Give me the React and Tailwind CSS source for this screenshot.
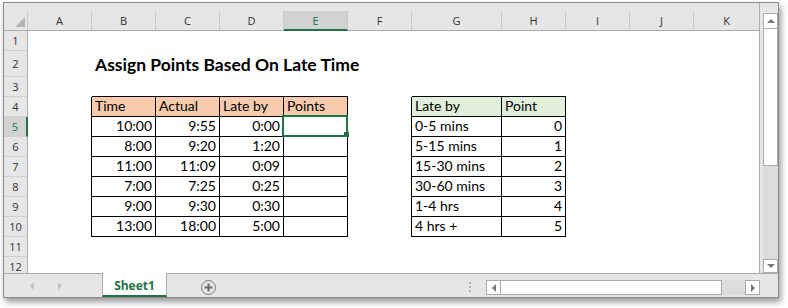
import React from "react";

// sheet columns, widths include the right gridline
const COLS = [
  { id: "A", w: "w-[64px]" },
  { id: "B", w: "w-[64px]" },
  { id: "C", w: "w-[64px]" },
  { id: "D", w: "w-[64px]" },
  { id: "E", w: "w-[64px]" },
  { id: "F", w: "w-[64px]" },
  { id: "G", w: "w-[90px]" },
  { id: "H", w: "w-[64px]" },
  { id: "I", w: "w-[64px]" },
  { id: "J", w: "w-[64px]" },
  { id: "K", w: "w-[65px]" },
];

const TIMES = [
  ["10:00", "9:55", "0:00"],
  ["8:00", "9:20", "1:20"],
  ["11:00", "11:09", "0:09"],
  ["7:00", "7:25", "0:25"],
  ["9:00", "9:30", "0:30"],
  ["13:00", "18:00", "5:00"],
];

const POINTS = [
  ["0-5 mins", "0"],
  ["5-15 mins", "1"],
  ["15-30 mins", "2"],
  ["30-60 mins", "3"],
  ["1-4 hrs", "4"],
  ["4 hrs +", "5"],
];

const ROW_H = {
  1: "h-[20px]",
  2: "h-[26px]",
};

const inTable = (col, row) =>
  row >= 4 && row <= 10 && ("BCDE".includes(col) || "GH".includes(col));

function cellContent(col, row) {
  if (row === 2 && col === "B")
    return { text: "Assign Points Based On Late Time", title: true };
  if (row === 4) {
    const head = { B: "Time", C: "Actual", D: "Late by", E: "Points", G: "Late by", H: "Point" };
    if (head[col]) {
      return { text: head[col], bg: "BCDE".includes(col) ? "bg-[#f8cbad]" : "bg-[#e2efda]" };
    }
  }
  if (row >= 5 && row <= 10) {
    const i = row - 5;
    if (col === "B") return { text: TIMES[i][0], right: true };
    if (col === "C") return { text: TIMES[i][1], right: true };
    if (col === "D") return { text: TIMES[i][2], right: true };
    if (col === "G") return { text: POINTS[i][0] };
    if (col === "H") return { text: POINTS[i][1], right: true };
  }
  return null;
}

function Cell({ col, row }) {
  const c = cellContent(col.id, row);
  const rightLine = inTable(col.id, row) || (row >= 4 && row <= 10 && (col.id === "A" || col.id === "F"));
  const bottomLine = inTable(col.id, row) || (row === 3 && ("BCDE".includes(col.id) || "GH".includes(col.id)));
  const selected = col.id === "E" && row === 5;

  return (
    <div
      className={[
        col.w,
        "shrink-0 h-full flex items-end pb-[2px] px-[3px] whitespace-nowrap",
        rightLine ? "border-r border-r-black" : "",
        bottomLine ? "border-b border-b-black" : "",
        c && c.right ? "justify-end" : "justify-start",
        c && c.bg ? c.bg : "",
        selected ? "relative" : "",
      ].join(" ")}
    >
      {c && c.title ? (
        <span className="font-bold text-[17.5px] leading-[20px]">{c.text}</span>
      ) : c ? (
        <span className="text-[14px] leading-[16px]">{c.text}</span>
      ) : null}
      {selected && (
        <div className="absolute -left-[2px] -top-[2px] -right-[1px] -bottom-[1px] border-2 border-[#217346]">
          <div className="absolute -right-[3px] -bottom-[2px] w-[5px] h-[5px] bg-[#217346]" />
        </div>
      )}
    </div>
  );
}

function Sheet() {
  const rows = [1, 2, 3, 4, 5, 6, 7, 8, 9, 10, 11, 12];
  return (
    <div className="w-[756px] h-full overflow-hidden border-r border-r-[#ababab] bg-white flex flex-col">
      <div className="bg-[#e6e6e6] pt-[8px] shrink-0">
        <div className="flex h-[20px] font-['Open_Sans',sans-serif] text-[11px] text-[#333]">
          <div className="w-[24px] shrink-0 h-full border-r border-r-[#c8c8c8] border-b border-b-[#ababab] relative">
            <svg className="absolute right-[2px] bottom-[3px]" width="10" height="10" viewBox="0 0 10 10">
              <polygon points="10,0 10,10 0,10" fill="#b4b4b4" />
            </svg>
          </div>
          {COLS.map((col) =>
            col.id === "E" ? (
              <div
                key={col.id}
                className={col.w + " shrink-0 h-full flex items-center justify-center bg-[#d2d2d2] text-[#217346] border-r border-r-[#c8c8c8] border-b-2 border-b-[#217346] pt-[2px]"}
              >
                {col.id}
              </div>
            ) : (
              <div
                key={col.id}
                className={col.w + " shrink-0 h-full flex items-center justify-center pt-[1px] " + (col.id === "K" ? "" : "border-r border-r-[#c8c8c8] ") + "border-b border-b-[#ababab]"}
              >
                {col.id}
              </div>
            )
          )}
        </div>
      </div>
      <div className="font-['Lato',sans-serif] text-black">
        {rows.map((row) => (
          <div key={row} className={"flex shrink-0 " + (ROW_H[row] || "h-[20px]")}>
            <div
              className={
                "w-[24px] shrink-0 h-full flex items-center justify-center font-['Open_Sans',sans-serif] text-[11px] pt-[1px] border-b border-b-[#d0d0d0] " +
                (row === 5
                  ? "bg-[#d2d2d2] text-[#217346] border-r-2 border-r-[#217346]"
                  : "bg-[#e6e6e6] text-[#333] border-r border-r-[#ababab]")
              }
            >
              {row}
            </div>
            {COLS.map((col) => (
              <Cell key={col.id} col={col} row={row} />
            ))}
          </div>
        ))}
      </div>
    </div>
  );
}

function Arrow({ dir, color = "#777" }) {
  const pts = {
    up: "0,5 4,1 8,5",
    down: "0,1 4,5 8,1",
    left: "5,0 1,4 5,8",
    right: "1,0 5,4 1,8",
  }[dir];
  const w = dir === "up" || dir === "down" ? 8 : 6;
  const h = dir === "up" || dir === "down" ? 6 : 8;
  return (
    <svg width={w} height={h} viewBox={`0 0 ${w} ${h}`}>
      <polygon points={pts} fill={color} />
    </svg>
  );
}

function VScroll() {
  return (
    <div className="w-[18px] h-full flex flex-col pl-[3px] pt-[10px]">
      <div className="w-[15px] h-[16px] shrink-0 border border-[#ababab] bg-white flex items-center justify-center">
        <Arrow dir="up" />
      </div>
      <div className="w-[15px] h-[138px] shrink-0 -mt-px border border-[#ababab] bg-white" />
      <div className="w-[15px] flex-1 bg-[#dcdcdc]" />
      <div className="w-[15px] h-[14px] shrink-0 border border-[#ababab] bg-white flex items-center justify-center">
        <Arrow dir="down" />
      </div>
    </div>
  );
}

function TabBar() {
  return (
    <div className="flex h-[24px] shrink-0">
      <div className="w-[98px] shrink-0 border-t border-t-[#ababab] flex items-center gap-[22px] pl-[25px] pt-[1px]">
        <Arrow dir="left" color="#c4c4c4" />
        <Arrow dir="right" color="#c4c4c4" />
      </div>
      <div className="w-[65px] shrink-0 bg-white border-x border-x-[#ababab] border-b-2 border-b-[#217346] flex items-center justify-center pt-[3px] font-['Open_Sans',sans-serif] font-bold text-[12px] text-[#217346]">
        Sheet1
      </div>
      <div className="flex-1 border-t border-t-[#ababab] flex items-start pt-[6px] pr-[18px]">
        <div className="ml-[34px] w-[15px] h-[15px] rounded-full border border-[#7a7a7a] flex items-center justify-center shrink-0">
          <svg width="9" height="9" viewBox="0 0 9 9">
            <rect x="3.5" y="0.5" width="2" height="8" fill="#6a6a6a" />
            <rect x="0.5" y="3.5" width="8" height="2" fill="#6a6a6a" />
          </svg>
        </div>
        <div className="flex-1" />
        <div className="flex flex-col gap-[2px] pt-[2px] mr-[15px] shrink-0">
          <div className="w-[2px] h-[2px] bg-[#b0b0b0]" />
          <div className="w-[2px] h-[2px] bg-[#b0b0b0]" />
          <div className="w-[2px] h-[2px] bg-[#b0b0b0]" />
        </div>
        <div className="w-[15px] h-[15px] shrink-0 border border-[#ababab] bg-white flex items-center justify-center">
          <Arrow dir="left" />
        </div>
        <div className="w-[222px] h-[15px] shrink-0 -ml-px border border-[#ababab] bg-white" />
        <div className="w-[23px] h-[15px] shrink-0 bg-[#dcdcdc]" />
        <div className="w-[15px] h-[15px] shrink-0 border border-[#ababab] bg-white flex items-center justify-center">
          <Arrow dir="right" />
        </div>
      </div>
    </div>
  );
}

export default function App() {
  return (
    <div className="w-[788px] h-[308px] bg-white pl-[3px] pt-[2px]">
      <div className="w-[776px] h-[296px] border border-[#8a8a8a] bg-[#e6e6e6] flex flex-col shadow-[2px_4px_6px_rgba(0,0,0,0.4)]">
        <div className="flex h-[270px] shrink-0">
          <Sheet />
          <VScroll />
        </div>
        <TabBar />
      </div>
    </div>
  );
}
